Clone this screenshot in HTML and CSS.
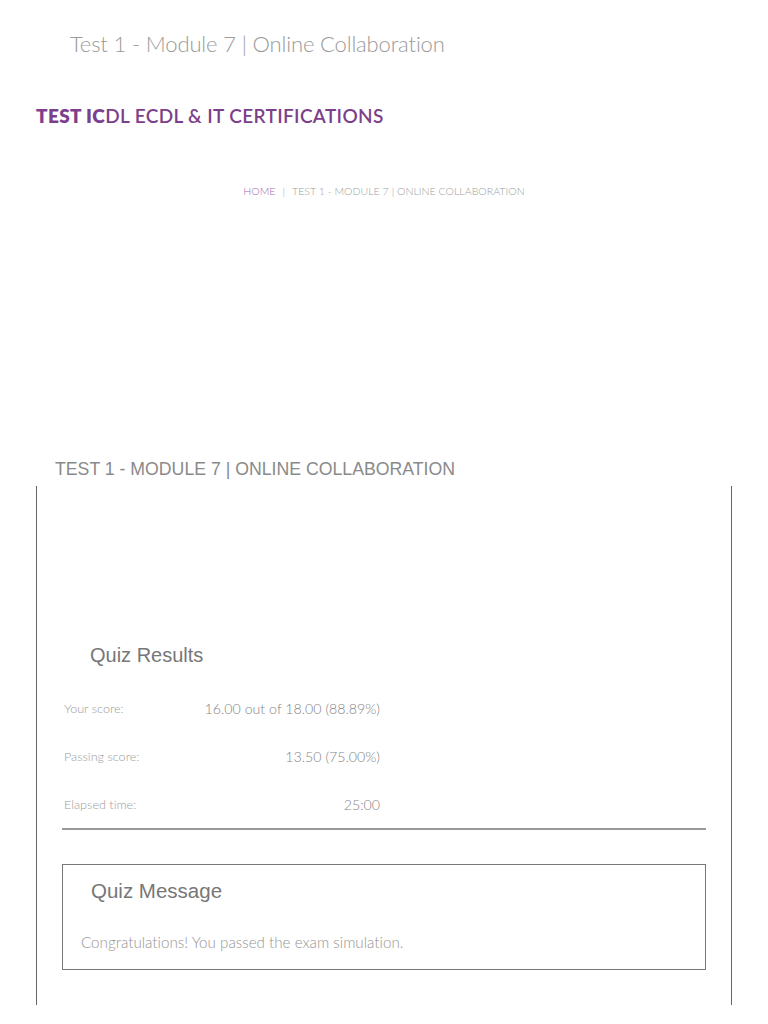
FILE: index.html
```html
<!DOCTYPE html>
<html lang="en">
<head>
<meta charset="utf-8">
<title>Test 1 - Module 7 | Online Collaboration</title>
<link rel="stylesheet" href="styles.css">
</head>
<body>
<header class="site-header">
  <div class="site-title">Test 1 - Module 7 | Online Collaboration</div>
  <div class="brand"><span class="brand-strong">TEST IC</span>DL ECDL &amp; IT CERTIFICATIONS</div>
  <nav class="breadcrumb"><a class="crumb-home" href="#">HOME</a><span class="crumb-sep">|</span><span class="crumb-current">TEST 1 - MODULE 7 | ONLINE COLLABORATION</span></nav>
</header>
<main>
  <h1 class="section-title">TEST 1 - MODULE 7 | ONLINE COLLABORATION</h1>
  <section class="panel">
    <div class="results">
      <h2 class="results-title">Quiz Results</h2>
      <div class="result-rows">
        <div class="result-row"><span class="result-label">Your score:</span><span class="result-value">16.00 out of 18.00 (88.89%)</span></div>
        <div class="result-row"><span class="result-label">Passing score:</span><span class="result-value">13.50 (75.00%)</span></div>
        <div class="result-row"><span class="result-label">Elapsed time:</span><span class="result-value">25:00</span></div>
      </div>
      <div class="message-box">
        <h2 class="message-title">Quiz Message</h2>
        <p class="message-text">Congratulations! You passed the exam simulation.</p>
      </div>
    </div>
  </section>
</main>
</body>
</html>
```
FILE: styles.css
```css
html, body {
  margin: 0;
  padding: 0;
  background: #ffffff;
}
body {
  font-family: Lato, "Open Sans", sans-serif;
  font-variant-ligatures: none;
}
.site-title {
  padding: 29px 0 0 70px;
  font-weight: 300;
  font-size: 22px;
  letter-spacing: -0.15px;
  line-height: 30px;
  color: #9a9a9a;
}
.brand {
  margin-top: 45px;
  padding-left: 36px;
  font-weight: 600;
  font-size: 19px;
  line-height: 24px;
  color: #7d3f8c;
  letter-spacing: 0.35px;
}
.brand-strong {
  font-weight: 800;
}
.breadcrumb {
  margin-top: 56px;
  text-align: center;
  font-weight: 300;
  font-size: 10.6px;
  line-height: 14px;
  color: #a0a0a0;
}
.crumb-home {
  color: #9b6aae;
  text-decoration: none;
}
.crumb-sep {
  margin: 0 7px;
}
.section-title {
  margin: 260px 0 0 0;
  padding-left: 55px;
  font-family: "Liberation Sans", Arial, sans-serif;
  font-weight: 400;
  font-size: 17.7px;
  line-height: 22px;
  color: #8a8a8a;
}
.panel {
  margin: 6px 0 0 36px;
  width: 696px;
  height: 519px;
  box-sizing: border-box;
  border-left: 1px solid #666;
  border-right: 1px solid #666;
  padding-top: 157px;
}
.results {
  margin-left: 25px;
  width: 644px;
}
.results-title {
  margin: 0;
  padding-left: 28px;
  font-family: "Liberation Sans", Arial, sans-serif;
  font-weight: 400;
  font-size: 20px;
  line-height: 24px;
  color: #777;
}
.result-rows {
  margin-top: 31px;
  display: flex;
  flex-direction: column;
  gap: 28px;
  padding-bottom: 14px;
  border-bottom: 2px solid #999;
}
.result-row {
  display: grid;
  grid-template-columns: 130px 186px;
  align-items: center;
  padding-left: 2px;
  height: 20px;
}
.result-label {
  font-weight: 300;
  font-size: 12.6px;
  color: #9c9c9c;
}
.result-value {
  text-align: right;
  font-weight: 300;
  font-size: 14.2px;
  color: #858585;
}
.message-box {
  margin-top: 34px;
  border: 1px solid #777;
  padding: 14px 0 17px 0;
}
.message-title {
  margin: 0;
  padding-left: 28px;
  font-family: "Liberation Sans", Arial, sans-serif;
  font-weight: 400;
  font-size: 20.5px;
  line-height: 24px;
  color: #777;
}
.message-text {
  margin: 29px 0 0 0;
  padding-left: 18px;
  font-weight: 300;
  font-size: 15.2px;
  line-height: 20px;
  color: #959595;
}
```
